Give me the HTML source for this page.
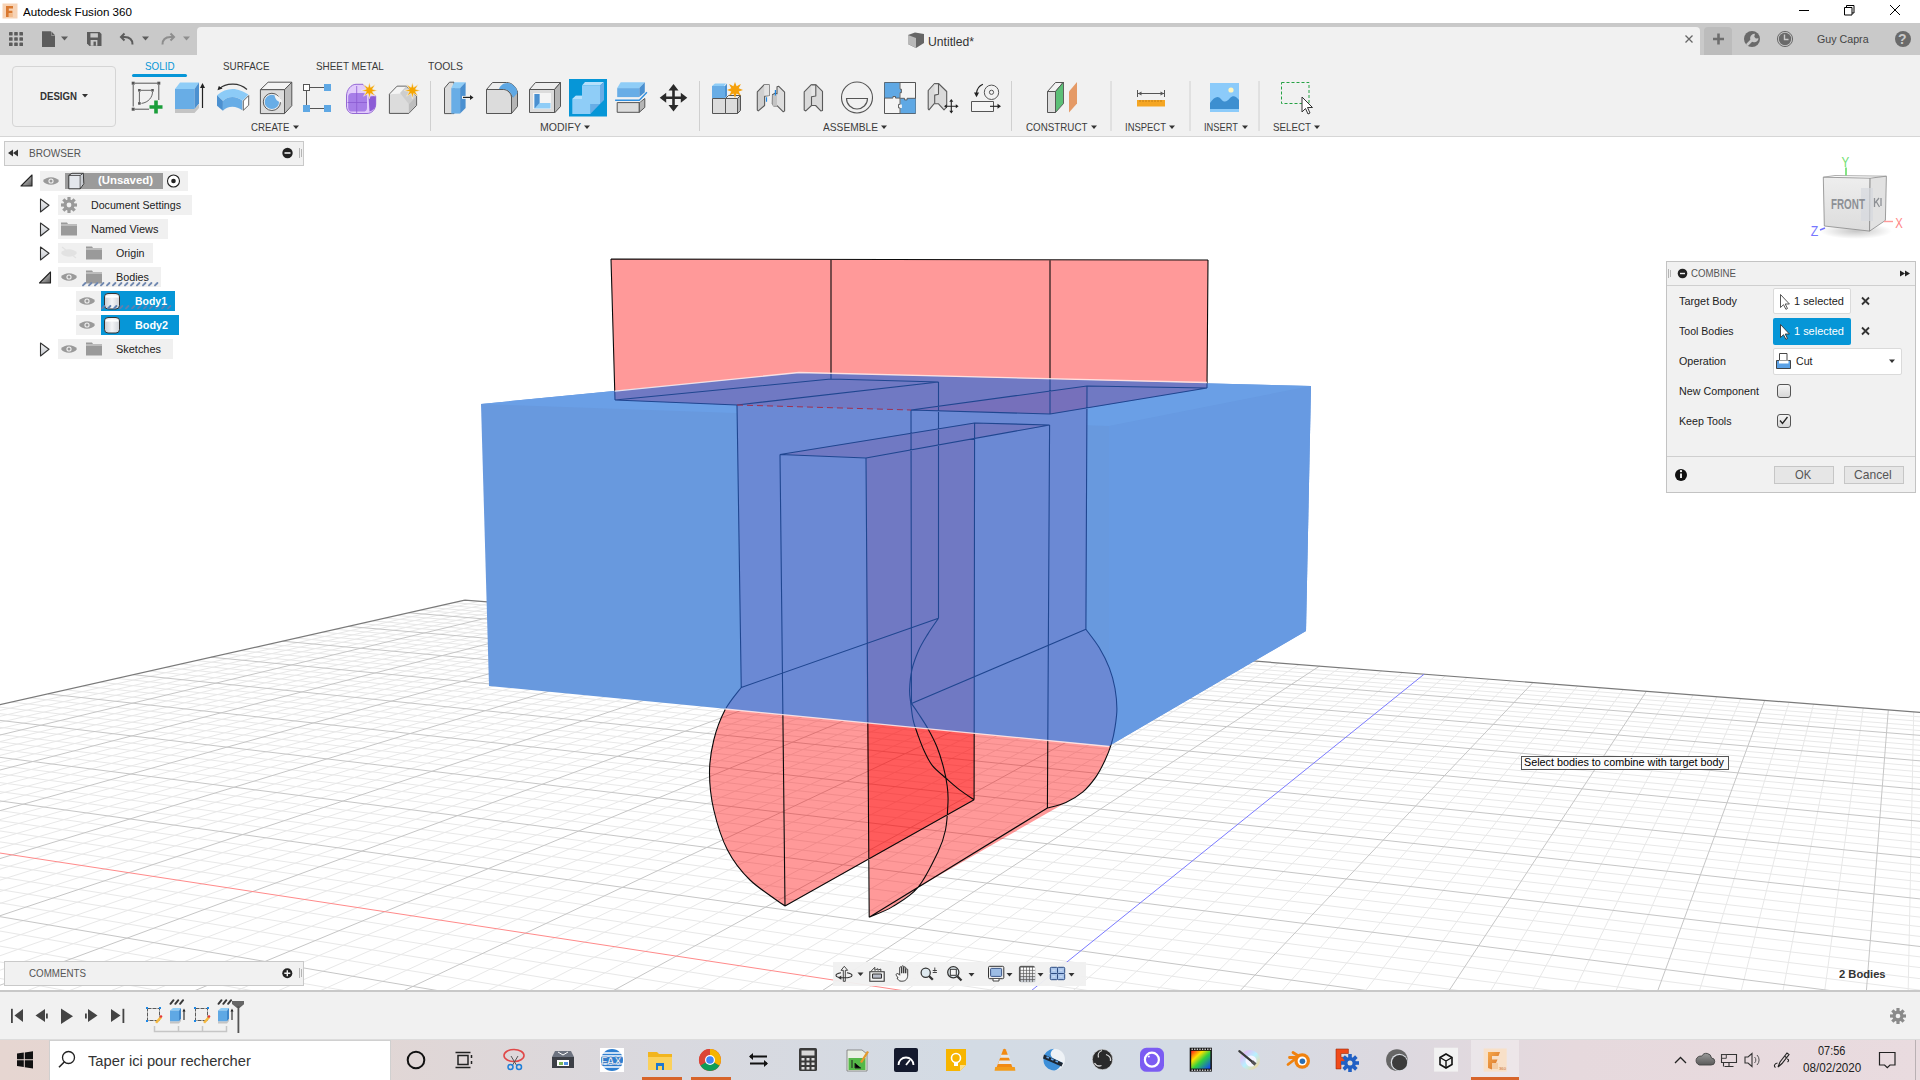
<!DOCTYPE html>
<html><head><meta charset="utf-8"><style>
*{margin:0;padding:0;box-sizing:border-box}
html,body{width:1920px;height:1080px;overflow:hidden;background:#fff;font-family:"Liberation Sans",sans-serif;}
.a{position:absolute}
.t{line-height:1;white-space:nowrap}
</style></head><body>
<svg class="a" style="left:0;top:0" width="1920" height="1080" viewBox="0 0 1920 1080">
<g fill="none">
<path d="M2120.4 1555.1L1991.2 717.9M2044.3 1538.6L1965.1 715.9M1970.2 1522.6L1939.3 713.9M1897.9 1507.0L1913.7 711.9M1758.5 1476.9L1863.2 708.0M1691.3 1462.4L1838.2 706.1M1625.8 1448.2L1813.5 704.2M1561.7 1434.4L1789.0 702.3M1438.0 1407.7L1740.7 698.6M1378.3 1394.8L1716.8 696.7M1319.9 1382.2L1693.1 694.9M1262.8 1369.9L1669.7 693.1M1152.3 1346.0L1623.3 689.5M1098.8 1334.4L1600.4 687.8M1046.5 1323.1L1577.7 686.0M995.3 1312.1L1555.2 684.3M895.9 1290.6L1510.8 680.9M847.8 1280.2L1488.8 679.2M800.6 1270.0L1467.1 677.5M754.4 1260.1L1445.5 675.8M664.6 1240.7L1402.8 672.5M621.1 1231.3L1381.7 670.9M578.3 1222.0L1360.8 669.3M536.4 1213.0L1340.1 667.7M454.9 1195.4L1299.1 664.5M415.3 1186.8L1278.9 663.0M376.4 1178.4L1258.8 661.4M338.2 1170.2L1238.8 659.9M263.8 1154.1L1199.4 656.9M227.6 1146.3L1180.0 655.4M192.1 1138.6L1160.6 653.9M157.1 1131.1L1141.5 652.4M89.1 1116.4L1103.6 649.5M55.9 1109.2L1084.8 648.0M23.2 1102.1L1066.2 646.6M-8.8 1095.2L1047.8 645.2M-71.4 1081.7L1011.3 642.3M-102.0 1075.1L993.2 641.0M-132.0 1068.6L975.3 639.6M-161.6 1062.2L957.5 638.2M-219.3 1049.8L922.4 635.5M-247.5 1043.7L905.0 634.2M-275.3 1037.7L887.7 632.8M-302.6 1031.8L870.6 631.5M-356.0 1020.2L836.6 628.9M-382.1 1014.6L819.9 627.6M-407.8 1009.0L803.2 626.3M-433.2 1003.6L786.7 625.0M-482.8 992.9L754.0 622.5M-507.0 987.6L737.8 621.3M-530.9 982.5L721.7 620.0M-554.5 977.4L705.8 618.8M-600.6 967.4L674.2 616.4M-623.2 962.5L658.5 615.2M-645.4 957.7L643.0 614.0M-667.4 953.0L627.6 612.8M-710.4 943.7L597.1 610.4M-731.5 939.1L582.0 609.2M-752.3 934.6L567.0 608.1M-772.8 930.2L552.1 606.9M-813.1 921.5L522.6 604.7M-832.8 917.3L508.0 603.5M-852.2 913.1L493.5 602.4M-871.5 908.9L479.1 601.3M2190.6 1534.9L-850.8 895.9M2183.2 1500.0L-812.2 887.2M2176.2 1466.9L-774.7 878.8M2169.5 1435.6L-738.2 870.6M2157.2 1377.7L-668.1 854.8M2151.5 1350.8L-634.4 847.3M2146.1 1325.2L-601.6 839.9M2140.9 1300.8L-569.6 832.7M2131.2 1255.2L-508.0 818.9M2126.7 1233.9L-478.3 812.2M2122.3 1213.5L-449.4 805.7M2118.2 1194.0L-421.1 799.3M2110.4 1157.2L-366.6 787.1M2106.7 1139.9L-340.2 781.1M2103.2 1123.3L-314.5 775.4M2099.8 1107.3L-289.3 769.7M2093.3 1077.0L-240.7 758.8M2090.3 1062.6L-217.1 753.5M2087.4 1048.8L-194.1 748.3M2084.5 1035.5L-171.6 743.2M2079.1 1010.1L-127.9 733.4M2076.6 998.0L-106.8 728.7M2074.1 986.3L-86.0 724.0M2071.7 975.0L-65.7 719.5M2067.1 953.5L-26.3 710.6M2064.9 943.2L-7.2 706.3M2062.8 933.2L11.6 702.1M2060.7 923.5L29.9 697.9M2056.8 904.9L65.7 689.9M2054.9 896.0L83.0 686.0M2053.1 887.4L100.1 682.2M2051.3 879.0L116.8 678.4M2047.8 862.8L149.4 671.1M2046.2 855.1L165.2 667.5M2044.6 847.5L180.8 664.0M2043.0 840.2L196.1 660.6M2040.0 826.0L225.9 653.9M2038.6 819.2L240.4 650.7M2037.2 812.5L254.6 647.4M2035.8 806.0L268.7 644.3M2033.1 793.5L296.0 638.1M2031.8 787.5L309.4 635.1M2030.6 781.5L322.5 632.2M2029.4 775.8L335.4 629.3M2027.0 764.6L360.6 623.6M2025.8 759.2L372.9 620.9M2024.7 753.9L385.0 618.1M2023.6 748.8L397.0 615.5M2021.5 738.7L420.3 610.2M2020.5 733.9L431.7 607.7M2019.4 729.1L442.9 605.1M2018.5 724.5L453.9 602.7" stroke="#e8e8e8" stroke-width="1"/>
<path d="M2198.5 1571.9L2017.5 719.9M1827.3 1491.8L1888.3 710.0M1499.2 1420.9L1764.7 700.4M1207.0 1357.8L1646.4 691.3M945.1 1301.2L1532.9 682.6M495.3 1204.1L1319.5 666.1M300.7 1162.1L1219.1 658.4M122.8 1123.6L1122.4 650.9M-40.4 1088.4L1029.4 643.7M-190.7 1055.9L939.9 636.8M-329.5 1026.0L853.5 630.2M-458.2 998.2L770.3 623.8M-577.7 972.3L689.9 617.6M-689.1 948.3L612.3 611.6M-793.1 925.8L537.3 605.8M2198.5 1571.9L-890.4 904.8M2163.2 1405.9L-702.7 862.6M2135.9 1277.5L-538.4 825.7M2096.5 1091.8L-264.7 764.2M2081.8 1022.6L-149.5 738.3M2069.4 964.1L-45.8 715.0M2058.7 914.1L48.0 693.9M2049.5 870.8L133.3 674.7M2041.5 833.0L211.1 657.2M2034.4 799.7L282.5 641.2M2028.2 770.1L348.1 626.4M2022.5 743.7L408.7 612.8" stroke="#c6c6c6" stroke-width="1"/>
<path d="M-890.4 904.8L464.8 600.2M2017.5 719.9L464.8 600.2" stroke="#7a7a7a" stroke-width="1.2"/>
<path d="M2114.2 1175.2L-393.5 793.1" stroke="#ff8a8a" stroke-width="1"/>
<path d="M709.1 1250.3L1424.1 674.2" stroke="#7a7aff" stroke-width="1"/>
</g>
<defs><clipPath id="bsil"><path d="M481 404L799 373L1311 386L1306 631L1109 746L489 686Z"/></clipPath><clipPath id="obsil"><path clip-rule="evenodd" d="M0 0H1920V1080H0ZM481 404L799 373L1311 386L1306 631L1109 746L489 686Z"/></clipPath></defs>
<path d="M611 259L1208 260L1207 388L1050 414L615 400Z" fill="rgba(255,0,0,0.4)"/>
<path d="M741.2 687.5C738.5 691.2 729.6 701.2 725.0 710.0C720.4 718.8 716.3 729.6 713.8 740.0C711.2 750.4 709.5 760.8 709.5 772.5C709.5 784.2 710.8 797.1 713.8 810.0C716.8 822.9 721.5 838.3 727.5 850.0C733.5 861.7 740.4 870.7 750.0 880.0C759.6 889.3 779.2 901.7 785.0 906.0L869.2 858.9L869.2 917.2L869.2 917.2C873.1 915.4 884.5 911.6 892.6 906.6C900.7 901.6 913.8 890.6 918.0 887.4L1065.9 802.4L1065.9 802.4C1068.7 800.7 1077.6 796.4 1082.6 792.2C1087.5 788.0 1091.9 782.6 1095.6 777.4C1099.3 772.1 1102.2 766.2 1104.8 760.7C1107.4 755.2 1109.6 749.7 1111.3 744.1C1113.0 738.5 1114.1 733.3 1115.0 727.4C1115.9 721.5 1116.9 715.4 1116.9 708.9C1116.9 702.4 1116.2 695.3 1115.0 688.5C1113.8 681.7 1112.0 674.9 1109.4 668.1C1106.8 661.3 1103.2 654.3 1099.3 647.8C1095.4 641.3 1088.1 632.4 1085.9 629.3L741.25 687.5Z" fill="rgba(255,0,0,0.4)"/>
<path d="M866.5 700L974.6 700L974.1 799.8L869.2 858.9Z" fill="rgba(255,0,0,0.4)"/>
<path d="M481 404L799 373L1311 386L1306 631L1109 746L489 686Z" fill="#6899de"/>
<path d="M1109 426L1311 386L1306 631L1109 746Z" fill="#679ae2"/>
<path d="M481 404L799 373L1311 386L1109 426Z" fill="#6a9fe6"/>
<g clip-path="url(#bsil)">
<path d="M614.7 391.7L799 373L1207 383L1207 388L1087.5 407.9L1085.9 629.3C1088.1 632.4 1095.4 641.3 1099.3 647.8C1103.2 654.3 1106.8 661.3 1109.4 668.1C1112.0 674.9 1113.8 681.7 1115.0 688.5C1116.2 695.3 1116.9 702.4 1116.9 708.9C1116.9 715.4 1115.9 721.5 1115.0 727.4C1114.1 733.3 1113.0 738.5 1111.3 744.1C1109.6 749.7 1105.9 757.9 1104.8 760.7L725 709.5L725.0 710.0C727.7 706.2 738.5 691.2 741.2 687.5L737 405L615 400Z" fill="#6b89d4"/>
<path d="M614.7 391.7L799 373L1207 383L1207 388L1050 414L911 410L737 405L615 400Z" fill="#7079c3"/>
<path d="M779.5 454.4L974.3 422.7L1049.5 425.3L974.3 438.6L974.6 760L866.5 760L866.3 457.5Z" fill="#7079c3"/>
<path d="M911 410L1087 386L1087.5 407.9L1050 414Z" fill="#7670bb"/>
</g>
<path d="M611 259L1208 260M611 259L615 400M1208 260L1207 388M831 259L831 379M1050 260L1050 414M615 400L737 405M615 400L831 379L938.5 382M737 405L938.5 382M911 410L1087 386L1207 388M911 410L1050 414L1207 388M938.5 382L938.5 618.3M911 410L911.5 703.5M1087 386L1085.9 629.3M737 405L741.25 687.5M780 454.5L974.6 423L1049.6 425M780 454.5L866 458L1049.6 425M780 454.5L785 906M866 458L869.2 917.2M974.6 423L974.1 799.8M1049.6 425L1047.4 808M741.25 687.5L938.5 618.3M911.5 703.5L1085.9 629.3M785 906L974.1 799.8M869.2 917.2L1047.4 808M741.2 687.5C738.5 691.2 729.6 701.2 725.0 710.0C720.4 718.8 716.3 729.6 713.8 740.0C711.2 750.4 709.5 760.8 709.5 772.5C709.5 784.2 710.8 797.1 713.8 810.0C716.8 822.9 721.5 838.3 727.5 850.0C733.5 861.7 740.4 870.7 750.0 880.0C759.6 889.3 779.2 901.7 785.0 906.0M938.5 618.3C936.7 620.9 931.1 628.7 927.8 634.1C924.5 639.5 921.1 644.8 918.5 650.7C915.9 656.6 913.5 662.8 912.0 669.3C910.5 675.8 909.8 684.0 909.6 689.6C909.4 695.2 910.1 697.7 910.7 702.6C911.3 707.5 911.9 714.0 913.0 719.3C914.1 724.5 915.8 728.9 917.6 734.1C919.5 739.3 921.6 745.5 924.1 750.7C926.6 756.0 928.7 761.0 932.4 765.6C936.1 770.2 941.8 774.5 946.3 778.5C950.8 782.5 954.7 786.1 959.3 789.6C963.9 793.1 971.6 798.1 974.1 799.8M911.5 703.5C912.7 705.2 915.8 709.5 918.5 713.7C921.2 717.9 924.7 723.0 927.8 728.5C930.9 734.0 934.4 740.5 937.0 747.0C939.6 753.5 941.8 760.9 943.5 767.4C945.2 773.9 946.5 780.2 947.2 786.0C948.0 791.8 948.3 794.9 948.0 802.2C947.7 809.5 947.2 821.7 945.5 830.0C943.8 838.3 942.6 842.4 938.0 852.0C933.4 861.6 925.6 878.3 918.0 887.4C910.4 896.5 900.7 901.6 892.6 906.6C884.5 911.6 873.1 915.4 869.2 917.2M1085.9 629.3C1088.1 632.4 1095.4 641.3 1099.3 647.8C1103.2 654.3 1106.8 661.3 1109.4 668.1C1112.0 674.9 1113.8 681.7 1115.0 688.5C1116.2 695.3 1116.9 702.4 1116.9 708.9C1116.9 715.4 1115.9 721.5 1115.0 727.4C1114.1 733.3 1113.0 738.5 1111.3 744.1C1109.6 749.7 1107.4 755.2 1104.8 760.7C1102.2 766.2 1099.3 772.1 1095.6 777.4C1091.9 782.6 1087.5 788.0 1082.6 792.2C1077.6 796.4 1071.8 799.8 1065.9 802.4C1060.0 805.0 1050.5 807.1 1047.4 808.0" fill="none" stroke="#0a0a0a" stroke-width="1.1" clip-path="url(#obsil)"/>
<path d="M611 259L1208 260M611 259L615 400M1208 260L1207 388M831 259L831 379M1050 260L1050 414M615 400L737 405M615 400L831 379L938.5 382M737 405L938.5 382M911 410L1087 386L1207 388M911 410L1050 414L1207 388M938.5 382L938.5 618.3M911 410L911.5 703.5M1087 386L1085.9 629.3M737 405L741.25 687.5M780 454.5L974.6 423L1049.6 425M780 454.5L866 458L1049.6 425M780 454.5L785 906M866 458L869.2 917.2M974.6 423L974.1 799.8M1049.6 425L1047.4 808M741.25 687.5L938.5 618.3M911.5 703.5L1085.9 629.3M785 906L974.1 799.8M869.2 917.2L1047.4 808M741.2 687.5C738.5 691.2 729.6 701.2 725.0 710.0C720.4 718.8 716.3 729.6 713.8 740.0C711.2 750.4 709.5 760.8 709.5 772.5C709.5 784.2 710.8 797.1 713.8 810.0C716.8 822.9 721.5 838.3 727.5 850.0C733.5 861.7 740.4 870.7 750.0 880.0C759.6 889.3 779.2 901.7 785.0 906.0M938.5 618.3C936.7 620.9 931.1 628.7 927.8 634.1C924.5 639.5 921.1 644.8 918.5 650.7C915.9 656.6 913.5 662.8 912.0 669.3C910.5 675.8 909.8 684.0 909.6 689.6C909.4 695.2 910.1 697.7 910.7 702.6C911.3 707.5 911.9 714.0 913.0 719.3C914.1 724.5 915.8 728.9 917.6 734.1C919.5 739.3 921.6 745.5 924.1 750.7C926.6 756.0 928.7 761.0 932.4 765.6C936.1 770.2 941.8 774.5 946.3 778.5C950.8 782.5 954.7 786.1 959.3 789.6C963.9 793.1 971.6 798.1 974.1 799.8M911.5 703.5C912.7 705.2 915.8 709.5 918.5 713.7C921.2 717.9 924.7 723.0 927.8 728.5C930.9 734.0 934.4 740.5 937.0 747.0C939.6 753.5 941.8 760.9 943.5 767.4C945.2 773.9 946.5 780.2 947.2 786.0C948.0 791.8 948.3 794.9 948.0 802.2C947.7 809.5 947.2 821.7 945.5 830.0C943.8 838.3 942.6 842.4 938.0 852.0C933.4 861.6 925.6 878.3 918.0 887.4C910.4 896.5 900.7 901.6 892.6 906.6C884.5 911.6 873.1 915.4 869.2 917.2M1085.9 629.3C1088.1 632.4 1095.4 641.3 1099.3 647.8C1103.2 654.3 1106.8 661.3 1109.4 668.1C1112.0 674.9 1113.8 681.7 1115.0 688.5C1116.2 695.3 1116.9 702.4 1116.9 708.9C1116.9 715.4 1115.9 721.5 1115.0 727.4C1114.1 733.3 1113.0 738.5 1111.3 744.1C1109.6 749.7 1107.4 755.2 1104.8 760.7C1102.2 766.2 1099.3 772.1 1095.6 777.4C1091.9 782.6 1087.5 788.0 1082.6 792.2C1077.6 796.4 1071.8 799.8 1065.9 802.4C1060.0 805.0 1050.5 807.1 1047.4 808.0" fill="none" stroke="#1f4690" stroke-width="1.1" clip-path="url(#bsil)"/>
<path d="M737 405L911 410" fill="none" stroke="#a03050" stroke-width="1" stroke-dasharray="6 4" clip-path="url(#bsil)"/>
<path d="M614.7 391.2L799 372.5L1207 382.5M725 709L1109 746.5" fill="none" stroke="rgba(255,235,235,0.85)" stroke-width="1.3"/>
</svg>
<div class="a" style="left:0px;top:0px;width:1920px;height:23px;background:#fff;"></div>
<svg class="a" style="left:2px;top:3px" width="17" height="17" viewBox="0 0 17 17">
<rect x="0.5" y="0.5" width="15" height="15" fill="#f7d3b5"/><path d="M4 3h7v2.5H6.8v2.2h3.6v2.4H6.8V14H4z" fill="#d9782f"/><path d="M6.8 10.1h4v3.9h-4z" fill="#f3bb8a"/></svg>
<div class="a t" style="left:23px;top:5.93px;font-size:11.66px;color:#000;transform:scaleX(0.9951);transform-origin:0 0;">Autodesk Fusion 360</div>
<svg class="a" style="left:1790px;top:0" width="130" height="23" viewBox="1790 0 130 23">
<path d="M1799 10.5h10" stroke="#000" stroke-width="1"/>
<path d="M1844.5 7.5h7.5v7.5h-7.5z M1846.5 7.5v-2h7.5v7.5h-2" fill="none" stroke="#000" stroke-width="1"/>
<path d="M1890 5l10 10M1900 5l-10 10" stroke="#000" stroke-width="1"/></svg>
<div class="a" style="left:0px;top:23px;width:1920px;height:32px;background:#c9c9c9;"></div>
<div class="a" style="left:197px;top:27px;width:1503px;height:28px;background:#f1f1f1;border-radius:4px 4px 0 0;"></div>
<div class="a" style="left:1704px;top:27px;width:28px;height:28px;background:#bcbcbc;border-radius:4px 4px 0 0;"></div>
<svg class="a" style="left:0;top:23px" width="1920" height="32" viewBox="0 23 1920 32">
<g fill="#5c5c5c">
<rect x="9" y="32" width="3.6" height="3.6" rx="0.6"/><rect x="14.2" y="32" width="3.6" height="3.6" rx="0.6"/><rect x="19.4" y="32" width="3.6" height="3.6" rx="0.6"/>
<rect x="9" y="37.2" width="3.6" height="3.6" rx="0.6"/><rect x="14.2" y="37.2" width="3.6" height="3.6" rx="0.6"/><rect x="19.4" y="37.2" width="3.6" height="3.6" rx="0.6"/>
<rect x="9" y="42.4" width="3.6" height="3.6" rx="0.6"/><rect x="14.2" y="42.4" width="3.6" height="3.6" rx="0.6"/><rect x="19.4" y="42.4" width="3.6" height="3.6" rx="0.6"/>
<path d="M42 31.2h8.6l4.4 4.4v11.3h-13z"/><path d="M51.2 31.2v4.4h3.8z" fill="#c9c9c9"/><path d="M51.5 31.5l3.2 3.4h-3.2z" fill="#5c5c5c"/>
<path d="M61 36.5h7l-3.5 4z"/>
<path d="M87 32h12.5l2 2v12h-12l-2.5-2.5z"/>
<path d="M142 36.5h7l-3.5 4z"/>
</g>
<path d="M90.4 33.3h7.5v4.2h-7.5z M90.6 40.1h6.8v5.7h-6.8z" fill="#c9c9c9"/>
<path d="M93.5 41.6h2.4v4.2h-2.4z" fill="#5c5c5c"/>
<path d="M132.5 44.5c0-5-3-7.5-8-7.5h-3M124.5 33.5l-3.5 3.5 3.5 3.5" fill="none" stroke="#5c5c5c" stroke-width="2"/>
<path d="M162.5 44.5c0-5 3-7.5 8-7.5h3M170.5 33.5l3.5 3.5-3.5 3.5" fill="none" stroke="#8e8e8e" stroke-width="2"/>
<path d="M183 36.5h7l-3.5 4z" fill="#8e8e8e"/>
<!-- doc cube -->
<path d="M908 35l7-2.5 9 1.5v9l-8 5-8-4z" fill="#666"/>
<path d="M908 35l8 3v10l-8-4z" fill="#b8b8b8"/>
<path d="M1685.5 35.5l7 7M1692.5 35.5l-7 7" stroke="#666" stroke-width="1.3"/>
<path d="M1718.5 33.5v11M1713 39h11" stroke="#6e6e6e" stroke-width="2.6"/>
<circle cx="1752" cy="39" r="8" fill="#6a6a6a"/>
<path d="M1747.5 44.5l5-5" stroke="#c9c9c9" stroke-width="2.6" stroke-linecap="round"/><path d="M1755.5 34a4.2 4.2 0 1 0 3 4.2l-2.6 0.3-1.6-1.8 0.6-2.6z" fill="#c9c9c9"/>
<circle cx="1785" cy="39" r="7.6" fill="none" stroke="#6a6a6a" stroke-width="1"/>
<circle cx="1785" cy="39" r="6.2" fill="#6a6a6a"/>
<path d="M1784.5 34.5v5h4" stroke="#c9c9c9" stroke-width="1.4" fill="none"/>
<circle cx="1903" cy="39" r="8" fill="#6a6a6a"/>
</g></svg>
<div class="a t" style="left:928px;top:35.55px;font-size:12.35px;color:#333;transform:scaleX(0.9858);transform-origin:0 0;">Untitled*</div>
<div class="a t" style="left:1817px;top:35.18px;font-size:10.43px;color:#444;transform:scaleX(1.0237);transform-origin:0 0;">Guy Capra</div>
<div class="a t" style="left:1898px;top:31.5px;font-size:14px;font-weight:bold;color:#c9c9c9">?</div>
<div class="a" style="left:0px;top:55px;width:1920px;height:81px;background:#f1f1f1;"></div>
<div class="a" style="left:0px;top:136px;width:1920px;height:1px;background:#d6d6d6;"></div>
<div class="a" style="left:12px;top:65.5px;width:104px;height:61px;border:1px solid #d5d5d5;border-radius:4px;"></div>
<div class="a t" style="left:39.5px;top:90.71px;font-size:10.97px;color:#333;font-weight:bold;transform:scaleX(0.8794);transform-origin:0 0;">DESIGN</div>
<div class="a t" style="left:144.5px;top:60.71px;font-size:10.97px;color:#0696d7;transform:scaleX(0.8958);transform-origin:0 0;">SOLID</div>
<div class="a" style="left:132px;top:73.5px;width:55px;height:3px;background:#0696d7;border-radius:1.5px;"></div>
<div class="a t" style="left:223px;top:61.21px;font-size:10.97px;color:#3a3a3a;transform:scaleX(0.8971);transform-origin:0 0;">SURFACE</div>
<div class="a t" style="left:316px;top:61.21px;font-size:10.97px;color:#3a3a3a;transform:scaleX(0.9008);transform-origin:0 0;">SHEET METAL</div>
<div class="a t" style="left:428px;top:61.21px;font-size:10.97px;color:#3a3a3a;transform:scaleX(0.9460);transform-origin:0 0;">TOOLS</div>
<div class="a t" style="left:251px;top:122.36px;font-size:11.39px;color:#3c3c3c;transform:scaleX(0.8492);transform-origin:0 0;">CREATE</div>
<div class="a t" style="left:540px;top:122.36px;font-size:11.39px;color:#3c3c3c;transform:scaleX(0.9261);transform-origin:0 0;">MODIFY</div>
<div class="a t" style="left:823px;top:122.36px;font-size:11.39px;color:#3c3c3c;transform:scaleX(0.8960);transform-origin:0 0;">ASSEMBLE</div>
<div class="a t" style="left:1026px;top:122.36px;font-size:11.39px;color:#3c3c3c;transform:scaleX(0.8605);transform-origin:0 0;">CONSTRUCT</div>
<div class="a t" style="left:1125px;top:122.36px;font-size:11.39px;color:#3c3c3c;transform:scaleX(0.8309);transform-origin:0 0;">INSPECT</div>
<div class="a t" style="left:1204px;top:122.36px;font-size:11.39px;color:#3c3c3c;transform:scaleX(0.8184);transform-origin:0 0;">INSERT</div>
<div class="a t" style="left:1273px;top:122.36px;font-size:11.39px;color:#3c3c3c;transform:scaleX(0.8580);transform-origin:0 0;">SELECT</div>
<svg class="a" style="left:0;top:55px" width="1920" height="82" viewBox="0 55 1920 82"><path d="M82 94h6l-3 3.5z" fill="#333"/><path d="M293 125.5h6l-3 3.5z" fill="#333"/><path d="M584 125.5h6l-3 3.5z" fill="#333"/><path d="M881 125.5h6l-3 3.5z" fill="#333"/><path d="M1091 125.5h6l-3 3.5z" fill="#333"/><path d="M1169 125.5h6l-3 3.5z" fill="#333"/><path d="M1242 125.5h6l-3 3.5z" fill="#333"/><path d="M1314 125.5h6l-3 3.5z" fill="#333"/><path d="M430.5 81v50" stroke="#d0d0d0" stroke-width="1"/><path d="M699.5 81v50" stroke="#d0d0d0" stroke-width="1"/><path d="M1011.5 81v50" stroke="#d0d0d0" stroke-width="1"/><path d="M1111 81v50" stroke="#d0d0d0" stroke-width="1"/><path d="M1190 81v50" stroke="#d0d0d0" stroke-width="1"/><path d="M1259 81v50" stroke="#d0d0d0" stroke-width="1"/><g>
<path d="M135 83.2h22.5M133.2 85v21.5M135 109.2h14M158.8 85v15" fill="none" stroke="#555" stroke-width="1"/>
<rect x="131.7" y="81.7" width="3" height="3" fill="#555"/><rect x="157.3" y="81.7" width="3" height="3" fill="#555"/><rect x="131.7" y="107.7" width="3" height="3" fill="#555"/>
<rect x="138.1" y="89" width="2.6" height="2.6" fill="#555"/><rect x="151.2" y="89" width="2.6" height="2.6" fill="#555"/><rect x="138.1" y="102.1" width="2.6" height="2.6" fill="#555"/>
<path d="M139.4 92v10M141 90.3h10M152.5 92c0 5-4 10.5-11 11.4" fill="none" stroke="#555" stroke-width="0.9"/>
<path d="M156 100.5v13M149.5 107h13" stroke="#1a9e3a" stroke-width="3.6"/></g><g><path d="M175 109h19.5l4.5-5v4l-4.5 5H175z" fill="#c4c4c4"/>
<path d="M175 89h19.5v20H175z" fill="#68ade6"/><path d="M175 89l5-6.5h19l-4.5 6.5z" fill="#8fcdf7"/><path d="M194.5 89l4.5-6.5v21l-4.5 5.5z" fill="#4b90d0"/>
<path d="M202.5 108V85" stroke="#222" stroke-width="1.2"/><path d="M200 88l2.5-5 2.5 5z" fill="#222"/></g><path d="M247 89.5C242 85 236.5 84 232.5 84.1C227 84.2 222 86.2 219.5 88.8" fill="none" stroke="#333" stroke-width="1.1"/><path d="M217.5 90.3L218.8 86l3.8 2.6z" fill="#222"/>
<path d="M217 95.3C222 91 227 89 232.5 89C238 89 244 91.5 248.4 94.6L242.8 100.5C239 98.5 236 97 232.5 97C228.5 97 225.5 98.5 222.9 101Z" fill="#8ccbf7"/>
<path d="M222.9 101C225.5 98.5 228.5 97 232.5 97C236 97 239 98.5 242.3 100.5V110.3C239 108 236 106.8 232.5 106.8C228.5 106.8 225.5 108.3 222.9 110.8Z" fill="#68ade6"/>
<path d="M217 95.3L222.9 101V110.8L217 105.7Z" fill="#4b90d0"/>
<path d="M243.3 101L248.7 95.6V105.2L243.3 110.3Z" fill="#fff" stroke="#555" stroke-width="0.9"/>
<g stroke="#555" stroke-width="1"><path d="M260.4 89.7L268.1 82.2H291.8L284.5 89.7Z" fill="#f4f4f4"/><path d="M284.5 89.7L291.8 82.2V105.7L284.5 113.6Z" fill="#bdbdbd"/><path d="M260.4 89.7H284.5V113.6H260.4Z" fill="#dcdcdc"/>
<circle cx="271.9" cy="101.9" r="8.6" fill="#f2f2f2"/></g><circle cx="271.9" cy="101.9" r="7.2" fill="#68ade6"/><path d="M274.5 94.9C275 99 277.5 102 282 102.6A8 8 0 0 0 274.5 94.9Z" fill="#f2f2f2"/><g><rect x="303.5" y="84.5" width="6" height="6" fill="#fff" stroke="#555"/><rect x="324" y="84" width="7" height="7" fill="#5fa8e4"/><rect x="303" y="105" width="7" height="7" fill="#5fa8e4"/><rect x="324" y="105" width="7" height="7" fill="#5fa8e4"/>
<path d="M310 87.5h14M306.5 91v14M310 108.5h14" stroke="#555" stroke-width="1"/></g><path d="M346.5 96C346.5 90 351 84.3 356 84.3H363L368 90L375.7 96V104C375.7 109 372 113.5 367 113.5H353C349 113.5 346.5 110 346.5 106Z" fill="#e2ccfb" stroke="#8a5ad0" stroke-width="0.9"/>
<path d="M348.2 96.5C348.2 94 350 93 352 93H363C365.5 93 367 94.5 367 97V108C367 110.5 365.5 111.6 363 111.6H352C350 111.6 348.2 110.5 348.2 108Z" fill="#a77ee8"/>
<path d="M368.5 96.5L375.7 96V105C375.5 108 372 111 369.5 111.5Z" fill="#8c5cd6"/>
<path d="M347.5 102.5H367M356.7 86V113" stroke="#8a5ad0" stroke-width="0.8"/>
<path d="M369.40 82.20L370.66 87.35L375.20 84.60L372.45 89.14L377.60 90.40L372.45 91.66L375.20 96.20L370.66 93.45L369.40 98.60L368.14 93.45L363.60 96.20L366.35 91.66L361.20 90.40L366.35 89.14L363.60 84.60L368.14 87.35Z" fill="#f5a500" stroke="#f1f1f1" stroke-width="0.6"/>
<path d="M389.4 94.2L397.1 86.2H406.4L416.6 96.2V105.4L408.8 113.4H389.4Z" fill="#dcdcdc" stroke="#555" stroke-width="1"/>
<path d="M389.9 94.2L397.3 86.7H406.3L402 93.5Z" fill="#f4f4f4"/><path d="M408.8 104.1L416.1 96.5V105.2L408.8 112.9Z" fill="#bdbdbd"/><path d="M400 93L406 86.5L416 96.2L408.8 104Z" fill="#cdcdcd"/>
<path d="M412.40 82.20L413.66 87.35L418.20 84.60L415.45 89.14L420.60 90.40L415.45 91.66L418.20 96.20L413.66 93.45L412.40 98.60L411.14 93.45L406.60 96.20L409.35 91.66L404.20 90.40L409.35 89.14L406.60 84.60L411.14 87.35Z" fill="#f5a500" stroke="#f1f1f1" stroke-width="0.6"/><g><path d="M444.5 88.1l5-5.9h4.5v31.4h-9.5z" fill="#dcdcdc" stroke="#555" stroke-width="1"/>
<path d="M451.3 88.1l3-5.9h11.3l-5.5 5.9z" fill="#8fcdf7"/><path d="M451.3 88.1h8.8v25.5h-8.8z" fill="#68ade6"/><path d="M460.1 88.1l5.5-5.9v25.9l-5.5 5.5z" fill="#4b90d0"/>
<path d="M462 97.4h9" stroke="#f1f1f1" stroke-width="3"/><path d="M463 97.4h8" stroke="#222" stroke-width="1.2"/><path d="M470 94.9l3.5 2.5-3.5 2.5z" fill="#222"/></g><g><path d="M486.5 89.5l6-7h14c6 0 11 6 11 11l-6 6v-3c0-4-4-7-8-7z" fill="#eee" stroke="#555" stroke-width="1"/>
<path d="M486.5 89.5h17c4 0 8 4 8 8v16h-25z" fill="#dcdcdc" stroke="#555" stroke-width="1"/><path d="M511.5 97l6-5.5v15l-6 7z" fill="#b5b5b5" stroke="#555" stroke-width="1"/>
<path d="M499 89c1-3 4-6 8-6 6 0 10 5 10.5 10l-4.5 5c-1-5-5-9-10-9z" fill="#5fa8e4"/></g><g stroke="#555" stroke-width="1"><path d="M529.5 89.5l6-7h25l-6 7z" fill="#eee"/><path d="M554.5 89.5l6-7v24l-6 6.5z" fill="#b5b5b5"/><path d="M529.5 89.5h25v23h-25z" fill="#dcdcdc"/></g>
<rect x="533" y="93" width="18" height="16" fill="#f4f4f4"/><path d="M534.5 94h5v9h11v5.5h-16z" fill="#8fcdf7"/><path d="M534.5 94h5v9l-5 5.5z" fill="#4b90d0"/><rect x="569" y="79" width="38" height="37.5" fill="#0696d7"/>
<path d="M572.3 99l3.5-3.3h14.5v18.2h-18z" fill="#8fcdf7"/><path d="M572.3 99l3.5-3.3h10l-3.5 3.3z" fill="#b6e0fb"/>
<path d="M582 85.4l3-3.5h19l-4 3.5z" fill="#b6e0fb"/><path d="M582 85.4h18v18.6h-18z" fill="#8fcdf7"/><path d="M600 85.4l4-3.5v18l-4 4.1z" fill="#68ade6"/>
<path d="M590.3 104h9.7l-9.7 9.9z" fill="#68ade6"/><path d="M582 99h8.3v15h-8.3z" fill="#8fcdf7"/><g><path d="M617.2 102.6h22.1v9.7h-22.1z" fill="#dcdcdc" stroke="#555" stroke-width="1"/><path d="M639.3 102.6l5.5-4.1v8.9l-5.5 4.9z" fill="#b5b5b5" stroke="#555" stroke-width="1"/>
<path d="M615.1 100.3h24.2l7.6-8" stroke="#f1f1f1" stroke-width="3.2" fill="none"/><path d="M615.1 100.3h24.2l7.6-8" stroke="#2f8fe0" stroke-width="1.4" fill="none"/>
<path d="M617.2 88.1l3.5-5.9h24.1l-5.5 5.9z" fill="#8fcdf7"/><path d="M617.2 88.1h22.1v9h-22.1z" fill="#68ade6"/><path d="M639.3 88.1l5.5-5.9v10.1l-5.5 4.8z" fill="#4b90d0"/></g><g fill="#2a2a2a"><path d="M673.5 84l-5 6.5h3.7v6h-6v-3.7l-6.5 5 6.5 5v-3.7h6v6h-3.7l5 6.5 5-6.5h-3.7v-6h6v3.7l6.5-5-6.5-5v3.7h-6v-6h3.7z"/></g><g stroke="#555" stroke-width="1"><path d="M712.5 98.5h13v15h-13z" fill="#dcdcdc"/><path d="M725.5 98.5l3-3h12l-3 3z" fill="#eee"/><path d="M725.5 98.5h12v15h-12z" fill="#dcdcdc"/><path d="M737.5 98.5l3-3v15l-3 3z" fill="#b5b5b5"/></g>
<path d="M712 86l3-2.5h11l-2 2.5z" fill="#8fcdf7"/><path d="M712 86h13v12h-13z" fill="#68ade6"/><path d="M725 86l2-2.5v12.5l-2 2z" fill="#4b90d0"/>
<path d="M735 82l1.6 4.2 4.3-2.2-2.2 4.3 4.3 1.6-4.3 1.6 2.2 4.3-4.3-2.2-1.6 4.3-1.6-4.3-4.3 2.2 2.2-4.3-4.3-1.6 4.3-1.6-2.2-4.3 4.3 2.2z" fill="#f5a00a"/><g stroke="#5a5a5a" stroke-width="1.1" stroke-linejoin="round">
<path d="M757.3 91.8L764.2 84.7H769.2V95.5L764.6 96.3V105.5L758.3 110.9L757.3 110.1Z" fill="#cfcfcf"/>
<path d="M764.2 84.9h5v10.6h-5z" fill="#e2e2e2" stroke="none"/>
<path d="M772.5 94.7L774.6 93.4L777 93.8V86.8L778.8 86.3L784.6 92.2V110.9L783.3 111.8L777.3 105.9H773.8L772.3 103.8Z" fill="#dedede"/>
<path d="M772.5 95h4.5v10.9h-4.5z" fill="#c4c4c4" stroke="none"/>
<path d="M804.2 91.8L811.3 84.7H815.8L822.5 91.3V110.5L820.8 110.9L815.6 105.5H811.5L805.8 110.9L804.2 110.1Z" fill="#dadada"/>
<path d="M811.3 85h4.5v11l-4.3 0.8v8.7" fill="#e6e6e6"/>
<path d="M928.2 90.5L934.5 83.5H938.5L946.7 91.5V107L944 109.9L938.5 103.8H934L929 109.9L928.2 109Z" fill="#dadada"/>
<path d="M934.5 83.8h4v10.5l-3.8 0.8v8.7" fill="#e6e6e6"/>
</g>
<path d="M766.5 97.2v4.6M775.4 90v5.5" stroke="#1e88e5" stroke-width="1.2"/>
<circle cx="857" cy="97.5" r="15.5" fill="none" stroke="#555" stroke-width="1.1"/><path d="M846.5 98.5h21c0 6-5 10.5-10.5 10.5s-10.5-4.5-10.5-10.5z" fill="none" stroke="#555" stroke-width="1.1"/>
<path d="M884.5 82.5h31v31h-31z" fill="#f4f4f4" stroke="#555" stroke-width="1"/>
<path d="M884.7 82.7h15v6.5h1.7v3.5h-1.7v5.4h-4.5v-1.6h-2.6v1.6h-7.9z" fill="#5fa8e4"/>
<path d="M900.3 98.3h4.2v1.6h2.6v-1.6h8.5v15h-15.3v-5.2h1.6v-3.5h-1.6z" fill="#5fa8e4"/>
<path d="M900 82.7v6.5h1.4v3.5H900v5.4h-4.5v-1.6h-2.6v1.6h-8.2 M900 98v6.4h-1.5v3.5h1.5v5.4 M900.3 98.3h4.2v1.6h2.6v-1.6h8.5" fill="none" stroke="#555" stroke-width="0.9"/>
<g fill="#222"><path d="M951.3 101.3v10M946.3 106.3h10" stroke="#222" stroke-width="1.1"/><path d="M951.3 99l-2 2.8h4z M951.3 113.6l-2-2.8h4z M944 106.3l2.8-2v4z M958.6 106.3l-2.8-2v4z"/></g>
<path d="M971.5 101.5h22v10h-22z" fill="#f4f4f4" stroke="#555" stroke-width="1"/><path d="M990 106.3h8" stroke="#222" stroke-width="1.1"/><path d="M997.5 103.8l3.5 2.5-3.5 2.5z" fill="#222"/>
<circle cx="991.5" cy="92.3" r="7.2" fill="none" stroke="#555" stroke-width="1"/><circle cx="991.5" cy="92.3" r="2.1" fill="none" stroke="#555" stroke-width="1"/>
<path d="M982.9 84.2c-3.5 1.5-6 4.5-6.5 9" fill="none" stroke="#222" stroke-width="1.2"/><path d="M974 92.5l2.5 4.7 2.6-4.7z" fill="#222"/><g stroke="#555" stroke-width="1" stroke-linejoin="round"><path d="M1047.5 91.5l8-9h7.5l-7.5 9z" fill="#f2f2f2"/><path d="M1047.5 91.5h8v21h-8z" fill="#dcdcdc"/></g>
<path d="M1055.5 91.5l8-9.5v21.5l-8 9z" fill="#5bbf76" stroke="#555" stroke-width="0.9" stroke-linejoin="round"/><path d="M1069 91.5l8-9.5v21.5l-8 9z" fill="#e59a66"/><g><path d="M1137 100h28v6.5h-28z" fill="#f5a623"/><path d="M1140 100v2M1143 100v2M1146 100v2M1149 100v2M1152 100v2M1155 100v2M1158 100v2M1161 100v2" stroke="#b8740c" stroke-width="0.8"/>
<path d="M1137.5 90v7M1164.5 90v7M1138 93.5h26" stroke="#555" stroke-width="1"/><path d="M1138 93.5l3.5-2v4z M1164 93.5l-3.5-2v4z" fill="#555"/></g><g><rect x="1210" y="83" width="29" height="29" fill="#8ccbfa"/><path d="M1210 103c4-6 8-8 11-4 3 4 6 3 9-1 3-3 6-2 9 2v9h-29z" fill="#3d8fd0"/><circle cx="1231" cy="90" r="2.6" fill="#fff5c0"/></g><g><path d="M1281.5 82.5h27.5v21h-27.5z" fill="none" stroke="#25a244" stroke-width="1" stroke-dasharray="3 2"/>
<path d="M1302 97v15l3.5-3.5 2.5 5.5 2-1-2.5-5.5h5z" fill="#fff" stroke="#333" stroke-width="1"/></g></svg>
<div class="a" style="left:4px;top:141px;width:300px;height:25px;background:#f1f1f1;border:1px solid #c9c9c9"></div>
<div class="a t" style="left:29px;top:147.86px;font-size:11.39px;color:#555;transform:scaleX(0.8839);transform-origin:0 0;">BROWSER</div>
<div class="a" style="left:40px;top:171px;width:148px;height:20px;background:#f0f0f0;"></div>
<div class="a" style="left:58px;top:195px;width:134px;height:20px;background:#f0f0f0;"></div>
<div class="a" style="left:58px;top:219px;width:110px;height:20px;background:#f0f0f0;"></div>
<div class="a" style="left:58px;top:243px;width:95px;height:20px;background:#f0f0f0;"></div>
<div class="a" style="left:58px;top:267px;width:103px;height:20px;background:#f0f0f0;"></div>
<div class="a" style="left:76px;top:291px;width:99px;height:20px;background:#f0f0f0;"></div>
<div class="a" style="left:76px;top:315px;width:103px;height:20px;background:#f0f0f0;"></div>
<div class="a" style="left:58px;top:339px;width:115px;height:20px;background:#f0f0f0;"></div>
<div class="a" style="left:65px;top:173px;width:98px;height:16px;background:#9b9b9b;"></div>
<div class="a" style="left:101px;top:291px;width:74px;height:20px;background:#0696d7;"></div>
<div class="a" style="left:101px;top:315px;width:78px;height:20px;background:#0696d7;"></div>
<svg class="a" style="left:0;top:140px" width="320" height="225" viewBox="0 140 320 225"><defs><linearGradient id="tg" x1="0" y1="0" x2="1" y2="1"><stop offset="0" stop-color="#f0f0f0"/><stop offset="1" stop-color="#555"/></linearGradient><linearGradient id="tc" x1="0" y1="0" x2="0" y2="1"><stop offset="0" stop-color="#f4f4f4"/><stop offset="1" stop-color="#c4c8cf"/></linearGradient><linearGradient id="bd" x1="0" y1="0" x2="1" y2="0"><stop offset="0" stop-color="#c9ccd2"/><stop offset="0.5" stop-color="#f4f5f7"/><stop offset="1" stop-color="#d0d3d8"/></linearGradient></defs><path d="M8 153l5-3.5v7z M13 153l5-3.5v7z" fill="#333"/><circle cx="287.5" cy="153" r="5.2" fill="#222"/><path d="M284.5 153h6" stroke="#f1f1f1" stroke-width="1.6"/><path d="M299.5 148v10M301.5 149v8" stroke="#9a9a9a" stroke-width="0.7"/><path d="M21 186L32 175v11z" fill="url(#tg)" stroke="#222" stroke-width="1.1" stroke-linejoin="round"/><path d="M43 181c3-5 13-5 16 0c-3 5-13 5-16 0z" fill="#9a9a9a"/><circle cx="51" cy="181" r="2.6" fill="#f0f0f0"/><circle cx="51" cy="181" r="1.5" fill="#9a9a9a"/><path d="M68.8 175.4L71.9 173.3H83.3L83.8 183.7L80.2 188.8H68.8Z" fill="#e4e7ec" stroke="#333" stroke-width="0.95" stroke-linejoin="round"/><path d="M68.8 175.4H80.2L83.3 173.3M80.2 175.4V188.8" fill="none" stroke="#333" stroke-width="0.85"/><path d="M80.7 175.8L83 174.2V183.5L80.7 187z" fill="#c9ccd2"/><circle cx="173.5" cy="181" r="6" fill="#fff" stroke="#222" stroke-width="1.1"/><circle cx="173.5" cy="181" r="2.3" fill="#222"/><path d="M40.5 199l8.5 6.3-8.5 6.7z" fill="url(#tc)" stroke="#333" stroke-width="1.1" stroke-linejoin="round"/><g transform="translate(69 205)"><circle r="5.5" fill="#9a9a9a"/><path d="M-1.6-8h3.2v16h-3.2z" fill="#9a9a9a" transform="rotate(0)"/><path d="M-1.6-8h3.2v16h-3.2z" fill="#9a9a9a" transform="rotate(45)"/><path d="M-1.6-8h3.2v16h-3.2z" fill="#9a9a9a" transform="rotate(90)"/><path d="M-1.6-8h3.2v16h-3.2z" fill="#9a9a9a" transform="rotate(135)"/><circle r="2.4" fill="#f0f0f0"/></g><path d="M40.5 223l8.5 6.3-8.5 6.7z" fill="url(#tc)" stroke="#333" stroke-width="1.1" stroke-linejoin="round"/><path d="M61 222.5h6l1 1.5h9v11.5h-16z" fill="#9a9a9a"/><path d="M61 225.0h16" stroke="#f0f0f0" stroke-width="0.8"/><path d="M40.5 247l8.5 6.3-8.5 6.7z" fill="url(#tc)" stroke="#333" stroke-width="1.1" stroke-linejoin="round"/><path d="M61 253c3-5 13-5 16 0c-3 5-13 5-16 0z" fill="#e2e2e2"/><path d="M62 247l14 11" stroke="#e2e2e2" stroke-width="1.2"/><path d="M86 246.5h6l1 1.5h9v11.5h-16z" fill="#9a9a9a"/><path d="M86 249.0h16" stroke="#f0f0f0" stroke-width="0.8"/><path d="M39.5 283L50.5 272v11z" fill="url(#tg)" stroke="#222" stroke-width="1.1" stroke-linejoin="round"/><path d="M61 277c3-5 13-5 16 0c-3 5-13 5-16 0z" fill="#9a9a9a"/><circle cx="69" cy="277" r="2.6" fill="#f0f0f0"/><circle cx="69" cy="277" r="1.5" fill="#9a9a9a"/><path d="M86 270.5h6l1 1.5h9v11.5h-16z" fill="#9a9a9a"/><path d="M86 273.0h16" stroke="#f0f0f0" stroke-width="0.8"/><path d="M83.0 285.40000000000003l2.4 -2.4M89.0 285.40000000000003l2.4 -2.4M95.0 285.40000000000003l2.4 -2.4M101.0 285.40000000000003l2.4 -2.4M107.0 285.40000000000003l2.4 -2.4M113.0 285.40000000000003l2.4 -2.4M119.0 285.40000000000003l2.4 -2.4M125.0 285.40000000000003l2.4 -2.4M131.0 285.40000000000003l2.4 -2.4M137.0 285.40000000000003l2.4 -2.4M143.0 285.40000000000003l2.4 -2.4M149.0 285.40000000000003l2.4 -2.4M155.0 285.40000000000003l2.4 -2.4" stroke="#7088b0" stroke-width="1.9" stroke-linecap="round"/><path d="M79 301c3-5 13-5 16 0c-3 5-13 5-16 0z" fill="#9a9a9a"/><circle cx="87" cy="301" r="2.6" fill="#f0f0f0"/><circle cx="87" cy="301" r="1.5" fill="#9a9a9a"/><rect x="104.5" y="293.5" width="15" height="15.5" rx="3.5" fill="url(#bd)" stroke="#333" stroke-width="1"/><path d="M105.5 296.5h13" stroke="#fff" stroke-width="2.2"/><path d="M102.0 308.40000000000003l2.4 -2.4M108.0 308.40000000000003l2.4 -2.4M114.0 308.40000000000003l2.4 -2.4M120.0 308.40000000000003l2.4 -2.4M126.0 308.40000000000003l2.4 -2.4M132.0 308.40000000000003l2.4 -2.4M138.0 308.40000000000003l2.4 -2.4M144.0 308.40000000000003l2.4 -2.4M150.0 308.40000000000003l2.4 -2.4M156.0 308.40000000000003l2.4 -2.4M162.0 308.40000000000003l2.4 -2.4M168.0 308.40000000000003l2.4 -2.4" stroke="#5f80b0" stroke-width="1.9" stroke-linecap="round"/><path d="M79 325c3-5 13-5 16 0c-3 5-13 5-16 0z" fill="#9a9a9a"/><circle cx="87" cy="325" r="2.6" fill="#f0f0f0"/><circle cx="87" cy="325" r="1.5" fill="#9a9a9a"/><rect x="104.5" y="317.5" width="15" height="15.5" rx="3.5" fill="url(#bd)" stroke="#333" stroke-width="1"/><path d="M105.5 320.5h13" stroke="#fff" stroke-width="2.2"/><path d="M40.5 343l8.5 6.3-8.5 6.7z" fill="url(#tc)" stroke="#333" stroke-width="1.1" stroke-linejoin="round"/><path d="M61 349c3-5 13-5 16 0c-3 5-13 5-16 0z" fill="#9a9a9a"/><circle cx="69" cy="349" r="2.6" fill="#f0f0f0"/><circle cx="69" cy="349" r="1.5" fill="#9a9a9a"/><path d="M86 342.5h6l1 1.5h9v11.5h-16z" fill="#9a9a9a"/><path d="M86 345.0h16" stroke="#f0f0f0" stroke-width="0.8"/></svg>
<div class="a t" style="left:98px;top:175.28px;font-size:11.25px;color:#fff;font-weight:bold;transform:scaleX(1.0115);transform-origin:0 0;">(Unsaved)</div>
<div class="a t" style="left:91px;top:199.51px;font-size:10.97px;color:#222;transform:scaleX(0.9708);transform-origin:0 0;">Document Settings</div>
<div class="a t" style="left:91px;top:223.51px;font-size:10.97px;color:#222;">Named Views</div>
<div class="a t" style="left:116px;top:247.51px;font-size:10.97px;color:#222;transform:scaleX(0.9737);transform-origin:0 0;">Origin</div>
<div class="a t" style="left:116px;top:271.51px;font-size:10.97px;color:#222;transform:scaleX(0.9835);transform-origin:0 0;">Bodies</div>
<div class="a t" style="left:134.5px;top:295.51px;font-size:10.97px;color:#fff;font-weight:bold;transform:scaleX(0.9542);transform-origin:0 0;">Body1</div>
<div class="a t" style="left:134.5px;top:319.51px;font-size:10.97px;color:#fff;font-weight:bold;transform:scaleX(0.9840);transform-origin:0 0;">Body2</div>
<div class="a t" style="left:116px;top:343.51px;font-size:10.97px;color:#222;transform:scaleX(0.9970);transform-origin:0 0;">Sketches</div>
<div class="a" style="left:1666px;top:261px;width:250px;height:232px;background:#f1f1f1;border:1px solid #c3c3c3"></div>
<div class="a" style="left:1667px;top:285px;width:248px;height:1px;background:#cfcfcf;"></div>
<div class="a" style="left:1667px;top:456px;width:248px;height:1px;background:#cfcfcf;"></div>
<div class="a" style="left:1772.5px;top:288px;width:78px;height:26px;background:#fff;border:1px solid #dadada;border-radius:2px"></div>
<div class="a" style="left:1772.5px;top:317.5px;width:78px;height:27px;background:#0696d7;border-radius:2px;"></div>
<div class="a" style="left:1772.5px;top:347.5px;width:129px;height:27px;background:#fff;border:1px solid #dadada;border-radius:2px"></div>
<div class="a" style="left:1777px;top:384px;width:14px;height:14px;background:linear-gradient(#f4f4f4,#d8d8d8);border:1px solid #555;border-radius:3px"></div>
<div class="a" style="left:1777px;top:414px;width:14px;height:14px;background:linear-gradient(#f4f4f4,#d8d8d8);border:1px solid #555;border-radius:3px"></div>
<div class="a" style="left:1774px;top:465.5px;width:60px;height:18px;background:#e6e6e6;border:1px solid #c6c6c6"></div>
<div class="a" style="left:1844px;top:465.5px;width:60px;height:18px;background:#e6e6e6;border:1px solid #c6c6c6"></div>
<svg class="a" style="left:1660px;top:255px" width="260" height="245" viewBox="1660 255 260 245"><path d="M1668.5 269v9M1670.5 270v7" stroke="#9a9a9a" stroke-width="0.7"/><circle cx="1682.5" cy="273.5" r="4.8" fill="#222"/><path d="M1680 273.5h5" stroke="#f1f1f1" stroke-width="1.4"/><path d="M1900 270.5l5 3-5 3z M1905 270.5l5 3-5 3z" fill="#222"/><path d="M1780.5 294.5v13l3-2.8 2.4 4.6 1.6-0.8-2.3-4.5h4.2z" fill="#fff" stroke="#444" stroke-width="0.9"/><path d="M1780.5 324.5v13l3-2.8 2.4 4.6 1.6-0.8-2.3-4.5h4.2z" fill="#fff" stroke="#333" stroke-width="0.9"/><path d="M1862 297.5l7 7M1869 297.5l-7 7 M1862 327.5l7 7M1869 327.5l-7 7" stroke="#333" stroke-width="1.8"/><path d="M1779.5 353.5h7.5v7h-7.5z" fill="#fff" stroke="#333" stroke-width="0.9"/><path d="M1776.5 360.5h14v8h-14z" fill="#5aa1e6" stroke="#333" stroke-width="0.9"/><path d="M1779 360.5h9.5v3h-9.5z" fill="#fff"/><path d="M1889 359.5h6l-3 3.5z" fill="#333"/><path d="M1780 420.5l2.5 3 5-6.5" fill="none" stroke="#222" stroke-width="1.3"/><circle cx="1681" cy="475" r="6" fill="#111"/><path d="M1681 473.5v4.5" stroke="#fff" stroke-width="1.8"/><circle cx="1681" cy="471.2" r="1.1" fill="#fff"/></svg>
<div class="a t" style="left:1691px;top:268.79px;font-size:10.29px;color:#555;transform:scaleX(0.9372);transform-origin:0 0;">COMBINE</div>
<div class="a t" style="left:1679px;top:295.86px;font-size:11.39px;color:#222;transform:scaleX(0.9547);transform-origin:0 0;">Target Body</div>
<div class="a t" style="left:1679px;top:325.86px;font-size:11.39px;color:#222;transform:scaleX(0.9276);transform-origin:0 0;">Tool Bodies</div>
<div class="a t" style="left:1679px;top:355.86px;font-size:11.39px;color:#222;transform:scaleX(0.9401);transform-origin:0 0;">Operation</div>
<div class="a t" style="left:1679px;top:385.86px;font-size:11.39px;color:#222;transform:scaleX(0.9434);transform-origin:0 0;">New Component</div>
<div class="a t" style="left:1679px;top:415.86px;font-size:11.39px;color:#222;transform:scaleX(0.9372);transform-origin:0 0;">Keep Tools</div>
<div class="a t" style="left:1794px;top:295.86px;font-size:11.39px;color:#222;transform:scaleX(0.9634);transform-origin:0 0;">1 selected</div>
<div class="a t" style="left:1794px;top:325.86px;font-size:11.39px;color:#fff;transform:scaleX(0.9634);transform-origin:0 0;">1 selected</div>
<div class="a t" style="left:1796px;top:355.86px;font-size:11.39px;color:#222;transform:scaleX(0.9313);transform-origin:0 0;">Cut</div>
<div class="a t" style="left:1795.4px;top:468.75px;font-size:12.35px;color:#555;transform:scaleX(0.9082);transform-origin:0 0;">OK</div>
<div class="a t" style="left:1854.4px;top:468.75px;font-size:12.35px;color:#555;transform:scaleX(0.9785);transform-origin:0 0;">Cancel</div>
<svg class="a" style="left:1790px;top:150px" width="125" height="95" viewBox="1790 150 125 95">
<defs><radialGradient id="sh" cx="0.5" cy="0.5" r="0.5"><stop offset="0" stop-color="#000" stop-opacity="0.22"/><stop offset="1" stop-color="#000" stop-opacity="0"/></radialGradient>
<linearGradient id="cf" x1="0" y1="0" x2="0" y2="1"><stop offset="0" stop-color="#eeeeee"/><stop offset="1" stop-color="#dcdcdc"/></linearGradient></defs>
<ellipse cx="1856" cy="231" rx="36" ry="8" fill="url(#sh)"/>
<path d="M1823.3 177.2L1870.1 178.2L1869.6 231.1L1824.3 226Z" fill="url(#cf)" stroke="#888" stroke-width="0.8"/>
<path d="M1870.1 178.2L1886.4 176.2L1885.4 220.4L1869.6 231.1Z" fill="#e2e2e2" stroke="#888" stroke-width="0.8"/>
<path d="M1823.3 177.2L1835 175.5L1886.4 176.2" fill="none" stroke="#999" stroke-width="0.8"/>
<rect x="1861" y="188" width="12" height="33" fill="#d6d9de" opacity="0.7"/>
<text x="1831" y="209.5" font-family="Liberation Sans" font-size="14.5" font-weight="bold" fill="#8d9095" transform="translate(1831 0) scale(0.68 1) translate(-1831 0)">FRONT</text>
<path d="M1874.5 198v9M1875 203l4-5M1876.5 202l3 5M1881 198v8" stroke="#8d9095" stroke-width="1.3"/>
<path d="M1846 167.5v8" stroke="#66dd66" stroke-width="1.6"/>
<text x="1841.5" y="167.5" font-family="Liberation Sans" font-size="14.5" fill="#6ee06e" transform="translate(1841.5 0) scale(0.8 1) translate(-1841.5 0)">Y</text>
<path d="M1884 221.5h9" stroke="#ff9a9a" stroke-width="1.4"/>
<text x="1895.3" y="227.6" font-family="Liberation Sans" font-size="14.5" fill="#ff8585" transform="translate(1895.3 0) scale(0.78 1) translate(-1895.3 0)">X</text>
<path d="M1820 230l5-2" stroke="#7070ff" stroke-width="1.4"/>
<text x="1810.8" y="235.7" font-family="Liberation Sans" font-size="14.5" fill="#7777ff" transform="translate(1810.8 0) scale(0.85 1) translate(-1810.8 0)">Z</text>
</svg>
<div class="a" style="left:4px;top:961px;width:300px;height:25px;background:#f1f1f1;border:1px solid #c9c9c9"></div>
<div class="a t" style="left:29px;top:968.06px;font-size:10.56px;color:#555;transform:scaleX(0.9252);transform-origin:0 0;">COMMENTS</div>
<div class="a" style="left:833px;top:962px;width:253px;height:24px;background:rgba(240,240,240,0.95);"></div>
<div class="a t" style="left:1839px;top:968.66px;font-size:11.39px;color:#333;font-weight:bold;transform:scaleX(0.9821);transform-origin:0 0;">2 Bodies</div>
<div class="a" style="left:1520.5px;top:755.5px;width:208px;height:14.5px;background:#fbfbfb;border:1px solid #555"></div>
<div class="a t" style="left:1523.5px;top:757.36px;font-size:11.39px;color:#000;transform:scaleX(0.9490);transform-origin:0 0;">Select bodies to combine with target body</div>
<div class="a" style="left:0px;top:990px;width:1920px;height:2px;background:#c8c8c8;"></div>
<div class="a" style="left:0px;top:992px;width:1920px;height:48px;background:#f1f1f1;"></div>
<div class="a" style="left:0px;top:1039px;width:1920px;height:1px;background:#dcdcdc;"></div>
<svg class="a" style="left:0;top:955px" width="1920" height="85" viewBox="0 955 1920 85"><circle cx="287.3" cy="973.3" r="5" fill="#222"/><path d="M284.3 973.3h6M287.3 970.3v6" stroke="#f1f1f1" stroke-width="1.4"/><path d="M299.5 968v10M301.5 969v8" stroke="#9a9a9a" stroke-width="0.7"/><g fill="#333" stroke="#333">
<path d="M843.3 981.3v-11h-2.3l3.3-4 3.3 4h-2.3v11z" fill="#f4f4f4" stroke-width="0.9"/>
<path d="M841 972.8c-3 0.6-5 1.4-5 2.4 0 1.5 3.5 2.6 8 2.6s8-1.1 8-2.6c0-1-2-1.8-5-2.4" fill="none" stroke-width="1.1"/>
<path d="M838 977.8l3.3-2.2v4.2z" stroke="none"/>
<path d="M857.5 972.5h6l-3 3.5z" stroke="none"/>
<path d="M869.8 971.8h14.4v9.5h-14.4z" fill="#f4f4f4" stroke-width="1.1"/><path d="M872.5 974h9v4.2h-9z" fill="#b8bcc8" stroke-width="1"/><path d="M870.8 971.5l4-4.2v3 l3-1.6v1.5l3-1.2v2.5" fill="none" stroke-width="0.9"/>
<path d="M898 977.5c-1.5-1.5-2.5-3-1.3-3.8 1-0.6 2.2 0.6 3 1.5v-7.5c0-1.2 2-1.2 2 0v5.5-6.5c0-1.2 2-1.2 2 0v6.5-5.5c0-1.2 2-1.2 2 0v5.5-3.5c0-1.2 2-1.2 2 0v5.5c0 3.5-2 6-5.5 6h-1c-2.2 0-3.2-1.5-4.2-3.2z" fill="#f6f6f6" stroke-width="0.95"/>
<circle cx="925.7" cy="972.7" r="4.6" fill="#dfeaf0" stroke-width="1.2"/><path d="M929 976l3.8 3.8" stroke-width="2.3"/><path d="M932.7 970.5h4.2M934.8 967.5v4M932.7 972.5h4.2" stroke-width="0.9"/>
<circle cx="953.3" cy="972.3" r="5.6" fill="#e4eef2" stroke-width="1.3"/><rect x="950.3" y="969.3" width="6" height="6" fill="#f4f4f4" stroke-width="1"/><path d="M957.5 976.5l4 4" stroke-width="2.3"/>
<path d="M968.5 973h6l-3 3.5z" stroke="none"/>
<rect x="988.5" y="966.3" width="15.3" height="12.4" rx="1.2" fill="#efefef" stroke="#333" stroke-width="1"/><rect x="990.6" y="968.4" width="11" height="8" rx="0.8" fill="#9dbde5" stroke="#2c4a80" stroke-width="0.9"/><path d="M993 979v2h6v-2" fill="#fff" stroke="#333" stroke-width="0.9"/>
<path d="M1006.5 973h6l-3 3.5z" stroke="none"/>
<rect x="1019.4" y="966.3" width="15.3" height="15.3" rx="1.5" fill="#555" stroke="#444" stroke-width="0.8"/><rect x="1020.60" y="967.50" width="2.4" height="2.4" fill="#fff" stroke="none"/><rect x="1020.60" y="970.55" width="2.4" height="2.4" fill="#f4f4f4" stroke="none"/><rect x="1020.60" y="973.60" width="2.4" height="2.4" fill="#e6e6e6" stroke="none"/><rect x="1020.60" y="976.65" width="2.4" height="2.4" fill="#d4d6da" stroke="none"/><rect x="1020.60" y="979.70" width="2.4" height="2.4" fill="#c4c8ce" stroke="none"/><rect x="1023.65" y="967.50" width="2.4" height="2.4" fill="#fff" stroke="none"/><rect x="1023.65" y="970.55" width="2.4" height="2.4" fill="#f4f4f4" stroke="none"/><rect x="1023.65" y="973.60" width="2.4" height="2.4" fill="#e6e6e6" stroke="none"/><rect x="1023.65" y="976.65" width="2.4" height="2.4" fill="#d4d6da" stroke="none"/><rect x="1023.65" y="979.70" width="2.4" height="2.4" fill="#c4c8ce" stroke="none"/><rect x="1026.70" y="967.50" width="2.4" height="2.4" fill="#fff" stroke="none"/><rect x="1026.70" y="970.55" width="2.4" height="2.4" fill="#f4f4f4" stroke="none"/><rect x="1026.70" y="973.60" width="2.4" height="2.4" fill="#e6e6e6" stroke="none"/><rect x="1026.70" y="976.65" width="2.4" height="2.4" fill="#d4d6da" stroke="none"/><rect x="1026.70" y="979.70" width="2.4" height="2.4" fill="#c4c8ce" stroke="none"/><rect x="1029.75" y="967.50" width="2.4" height="2.4" fill="#fff" stroke="none"/><rect x="1029.75" y="970.55" width="2.4" height="2.4" fill="#f4f4f4" stroke="none"/><rect x="1029.75" y="973.60" width="2.4" height="2.4" fill="#e6e6e6" stroke="none"/><rect x="1029.75" y="976.65" width="2.4" height="2.4" fill="#d4d6da" stroke="none"/><rect x="1029.75" y="979.70" width="2.4" height="2.4" fill="#c4c8ce" stroke="none"/><rect x="1032.80" y="967.50" width="2.4" height="2.4" fill="#fff" stroke="none"/><rect x="1032.80" y="970.55" width="2.4" height="2.4" fill="#f4f4f4" stroke="none"/><rect x="1032.80" y="973.60" width="2.4" height="2.4" fill="#e6e6e6" stroke="none"/><rect x="1032.80" y="976.65" width="2.4" height="2.4" fill="#d4d6da" stroke="none"/><rect x="1032.80" y="979.70" width="2.4" height="2.4" fill="#c4c8ce" stroke="none"/>
<path d="M1037.5 973h6l-3 3.5z" stroke="none"/>
<g fill="#a9c4ea" stroke="#2c4a80" stroke-width="1"><rect x="1050.3" y="967.3" width="7.2" height="6.2" rx="1"/><rect x="1057.5" y="967.3" width="7.2" height="6.2" rx="1"/><rect x="1050.3" y="973.5" width="7.2" height="6.2" rx="1"/><rect x="1057.5" y="973.5" width="7.2" height="6.2" rx="1"/></g>
<g fill="#c9daf2" stroke="none"><rect x="1052.3" y="969.6" width="3" height="1.6"/><rect x="1059.5" y="969.6" width="3" height="1.6"/><rect x="1052.3" y="975.8" width="3" height="1.6"/><rect x="1059.5" y="975.8" width="3" height="1.6"/></g>
<path d="M1068.5 973h6l-3 3.5z" stroke="none"/>
</g><g fill="#444">
<rect x="11" y="1008.8" width="1.8" height="14.2"/><path d="M23 1009v13l-8.5-6.5z"/>
<path d="M45 1009v13l-9.5-6.5z"/><rect x="46" y="1013.5" width="1.8" height="5"/>
<path d="M61 1008.5v15.5l12-7.7z"/>
<rect x="85" y="1013.5" width="1.8" height="5"/><path d="M88 1009v13l9.5-6.5z"/>
<path d="M111 1009v13l9.5-6.5z"/><rect x="122.5" y="1008.8" width="1.8" height="14.2"/>
</g>
<g>
<path d="M147.5 1008.5h12v12h-12z" fill="none" stroke="#333" stroke-width="0.8" stroke-dasharray="4 1"/>
<rect x="146" y="1007" width="2" height="2" fill="#1e88e5"/><rect x="159" y="1007" width="2" height="2" fill="#1e88e5"/><rect x="146" y="1020" width="2" height="2" fill="#1e88e5"/>
<path d="M155 1022l5-5.5 2 1.5-5 5.5z" fill="#f5b940"/><circle cx="161" cy="1016.5" r="1.3" fill="#e53935"/>
<path d="M170 1010.5l3-2.5h8l-2 2.5z" fill="#8fcdf7"/><path d="M170 1010.5h9v11h-9z" fill="#5fa8e4"/><path d="M179 1010.5l2-2.5v11l-2 2.5z" fill="#3f86c8"/><path d="M170 1021.5h9l2-2.5v2l-2 2.5h-9z" fill="#c4c4c4"/>
<path d="M184 1020v-10" stroke="#222" stroke-width="1.1"/><path d="M182.5 1011.5l1.5-3 1.5 3z" fill="#222"/>
<path d="M170.5 1003.8l3-3.6 M175.3 1003.8l3-3.6 M180.1 1003.8l3-3.6" stroke="#3a3a3a" stroke-width="2" stroke-linecap="round"/>
<path d="M195.5 1008.5h12v12h-12z" fill="none" stroke="#333" stroke-width="0.8" stroke-dasharray="4 1"/>
<rect x="194" y="1007" width="2" height="2" fill="#1e88e5"/><rect x="207" y="1007" width="2" height="2" fill="#1e88e5"/><rect x="194" y="1020" width="2" height="2" fill="#1e88e5"/>
<path d="M203 1022l5-5.5 2 1.5-5 5.5z" fill="#f5b940"/><circle cx="209" cy="1016.5" r="1.3" fill="#e53935"/>
<path d="M218 1010.5l3-2.5h8l-2 2.5z" fill="#8fcdf7"/><path d="M218 1010.5h9v11h-9z" fill="#5fa8e4"/><path d="M227 1010.5l2-2.5v11l-2 2.5z" fill="#3f86c8"/><path d="M218 1021.5h9l2-2.5v2l-2 2.5h-9z" fill="#c4c4c4"/>
<path d="M232 1020v-10" stroke="#222" stroke-width="1.1"/><path d="M230.5 1011.5l1.5-3 1.5 3z" fill="#222"/>
<path d="M218.5 1003.8l3-3.6 M223.3 1003.8l3-3.6 M228.1 1003.8l3-3.6" stroke="#3a3a3a" stroke-width="2" stroke-linecap="round"/>
<path d="M154.5 1026v5.5h72v-5.5M178.5 1026v5.5M202.5 1026v5.5" fill="none" stroke="#c6c6c6" stroke-width="1.5"/>
<path d="M232 1001h12v3l-4.5 4v-0z" fill="#666"/><path d="M232 1001h12v3l-5 4h-2l-5-4z" fill="#666"/><rect x="237.5" y="1006" width="1.8" height="27" fill="#555"/>
</g>
<g transform="translate(1898 1016)" fill="#8a8a8a"><circle r="5.5"/><path d="M-1.6-8h3.2v16h-3.2z"/><path d="M-1.6-8h3.2v16h-3.2z" transform="rotate(45)"/><path d="M-1.6-8h3.2v16h-3.2z" transform="rotate(90)"/><path d="M-1.6-8h3.2v16h-3.2z" transform="rotate(135)"/><circle r="2.3" fill="#f1f1f1"/></g></svg>
<div class="a" style="left:0px;top:1040px;width:1920px;height:40px;background:linear-gradient(90deg,#e6d6d1 0%,#e2d6d4 18%,#d9d9df 35%,#d3dbe4 50%,#d4dbe4 62%,#dcd9e0 72%,#e6d9dd 82%,#e9dbdf 100%);"></div>
<div class="a" style="left:48.5px;top:1040px;width:342.5px;height:40px;background:#fff;border:1px solid #d0d0d0;border-bottom:none;"></div>
<div class="a" style="left:1471px;top:1040px;width:48px;height:40px;background:rgba(255,255,255,0.35);"></div>
<div class="a" style="left:642px;top:1077px;width:40px;height:3px;background:#d7642a;"></div>
<div class="a" style="left:691px;top:1077px;width:40px;height:3px;background:#d7642a;"></div>
<div class="a" style="left:1471px;top:1077px;width:48px;height:3px;background:#d7642a;"></div>
<svg class="a" style="left:0;top:1040px" width="1920" height="40" viewBox="0 1040 1920 40"><path d="M17 1053.5l6.8-1v6.8H17z M24.8 1052.4l8.2-1.2v8.1h-8.2z M17 1060.3h6.8v6.8l-6.8-1z M24.8 1060.3H33v8.1l-8.2-1.2z" fill="#111"/><circle cx="68.5" cy="1057.5" r="6" fill="none" stroke="#222" stroke-width="1.3"/><path d="M64.5 1061.8l-5.5 5.5" stroke="#222" stroke-width="1.6"/><circle cx="416" cy="1060" r="8.3" fill="none" stroke="#111" stroke-width="2"/><path d="M455.5 1052.5h15M455.5 1067.5h15M458 1055.5h10v9h-10z" fill="none" stroke="#222" stroke-width="1.5"/><path d="M471.5 1055v3M471.5 1061v3" stroke="#222" stroke-width="1.5"/><ellipse cx="514" cy="1055.5" rx="10" ry="6" fill="none" stroke="#e04848" stroke-width="1.6"/><path d="M511 1056l6 10M518 1056l-6 10" stroke="#555" stroke-width="1"/><circle cx="510.5" cy="1067" r="2.5" fill="none" stroke="#1e7fd8" stroke-width="1.5"/><circle cx="519" cy="1067" r="2.5" fill="none" stroke="#1e7fd8" stroke-width="1.5"/><path d="M552 1057h22v11h-22z" fill="#3c3f46"/><path d="M555 1051h16l3 6h-22z" fill="#6d7380"/><path d="M557 1060h12v6h-12z" fill="#fff"/><path d="M559 1062h4v3h-4z" fill="#7bb55a"/><path d="M564 1062h4v3h-4z" fill="#4c8fe0"/><path d="M558 1052l5 3 5-3" stroke="#fff" stroke-width="1" fill="none"/><rect x="600" y="1048" width="24" height="24" fill="#fff"/><circle cx="612" cy="1060" r="11" fill="#2f7fd0"/><path d="M601 1053h22M601 1056h22M601 1064h22M601 1067h22" stroke="#fff" stroke-width="1.5"/><text x="601" y="1064.5" font-family="Liberation Sans" font-weight="bold" font-size="10.5" fill="#fff" stroke="#1c5fb0" stroke-width="0.4">FAX</text><path d="M648 1052h9l2 2h13v16h-24z" fill="#f2b51f"/><path d="M648 1057h24v13h-24z" fill="#fbd15c"/><path d="M656 1063h8v7h-2v-4h-4v4h-2z" fill="#1f78d1"/><circle cx="710" cy="1060" r="11" fill="#db4437"/><path d="M710 1060L700.5 1065.5A11 11 0 0 1 710.5 1049z" fill="#db4437"/><path d="M700.5 1065.5A11 11 0 0 0 719.5 1065.5L710 1060z" fill="#0f9d58"/><path d="M719.5 1065.5A11 11 0 0 0 710 1049L710 1060z" fill="#f4b400"/><circle cx="710" cy="1060" r="5" fill="#fff"/><circle cx="710" cy="1060" r="3.8" fill="#4285f4"/><path d="M750 1056.5h17M767 1063.5h-17" stroke="#111" stroke-width="1.8"/><path d="M753 1053l-4 3.5 4 3.5z M764 1060l4 3.5-4 3.5z" fill="#111"/><rect x="799" y="1048" width="18" height="23" rx="1.5" fill="#3a3a3a"/><rect x="801.5" y="1050.5" width="13" height="5" fill="#d8d8d8"/><g fill="#ddd"><rect x="801.5" y="1058" width="3" height="2.5"/><rect x="806.5" y="1058" width="3" height="2.5"/><rect x="811.5" y="1058" width="3" height="2.5"/><rect x="801.5" y="1062.5" width="3" height="2.5"/><rect x="806.5" y="1062.5" width="3" height="2.5"/><rect x="811.5" y="1062.5" width="3" height="2.5"/><rect x="801.5" y="1067" width="3" height="2.5"/><rect x="806.5" y="1067" width="3" height="2.5"/><rect x="811.5" y="1067" width="3" height="2.5"/></g><path d="M847 1050h15l5 4v17h-20z" fill="#e9f0e3" stroke="#777" stroke-width="0.8"/><path d="M848.5 1058h17v12h-17z" fill="#55b848"/><path d="M852 1060v8M855 1063v5h6" stroke="#222" stroke-width="1"/><path d="M860 1062l7-11 2 1-7 11z" fill="#e39a2b"/><rect x="894" y="1048" width="24" height="24" rx="2" fill="#141a2e"/><path d="M898.5 1065a7.5 7.5 0 1 1 15 0" fill="none" stroke="#fff" stroke-width="1.8"/><path d="M906 1065l4-5" stroke="#fff" stroke-width="1.8"/><path d="M946 1049h20v16l-6 6h-14z" fill="#f7b500"/><path d="M960 1071v-6h6z" fill="#fde08a"/><circle cx="956" cy="1058" r="4.5" fill="none" stroke="#fff" stroke-width="1.6"/><path d="M954 1063h4v3h-4z" fill="#fff"/><path d="M1003.2 1049.5c0.8-1 1.8-1 2.6 0l6.5 17.5h-15.6z" fill="#f28a12"/><path d="M1001.2 1054.8h7.6l1.3 3h-10.2z M999.3 1060.5h11.4l1.3 3.5h-14z" fill="#e8e8e8"/><path d="M995.2 1067h19.6l0.6 3.8h-20.8z" fill="#f39c1a"/><circle cx="1054.2" cy="1059.5" r="10.8" fill="#eef2f6"/><path d="M1043.4 1059.5a10.8 10.8 0 0 1 11-10.8c-4 2-5 6-2 9l10 5c-2 5-6 7.5-8 7.8a10.8 10.8 0 0 1-11-11z" fill="#3d8fd8"/><path d="M1044 1054.5l19 8.5-1.5 3.5-18.5-8z" fill="#1d2733"/><path d="M1046.5 1057l2.5 1M1051 1059l2.5 1M1055.5 1061l2.5 1" stroke="#6aa7e8" stroke-width="1.4"/><circle cx="1102.5" cy="1059.5" r="10.2" fill="#2a2a2a" stroke="#e0e0e0" stroke-width="0.6"/><path d="M1102 1050.5c-3 1-4.5 4-3.5 7M1094.5 1063c1.5 2.5 4.5 3.5 7 2.5M1110.5 1061c0.5-3-1.5-5.5-4.5-6.5" fill="none" stroke="#d8d8d8" stroke-width="1.3"/><rect x="1140" y="1047.8" width="24" height="24" rx="6.5" fill="#7b5cf2"/><circle cx="1151.9" cy="1059.7" r="7" fill="none" stroke="#fff" stroke-width="2.2"/><circle cx="1148.8" cy="1056.5" r="1.1" fill="#fff"/><defs><linearGradient id="rb" x1="0" y1="0" x2="1" y2="1"><stop offset="0" stop-color="#ff1a1a"/><stop offset="0.3" stop-color="#ffe000"/><stop offset="0.55" stop-color="#30d040"/><stop offset="1" stop-color="#1040ff"/></linearGradient></defs><rect x="1189.7" y="1047.7" width="22.2" height="23.9" fill="#111"/><rect x="1191.2" y="1050.8" width="19.2" height="17.8" fill="url(#rb)"/><rect x="1191.5" y="1048.6" width="1.4" height="1.2" fill="#fff"/><rect x="1191.5" y="1069.6" width="1.4" height="1.2" fill="#fff"/><rect x="1194.1" y="1048.6" width="1.4" height="1.2" fill="#fff"/><rect x="1194.1" y="1069.6" width="1.4" height="1.2" fill="#fff"/><rect x="1196.7" y="1048.6" width="1.4" height="1.2" fill="#fff"/><rect x="1196.7" y="1069.6" width="1.4" height="1.2" fill="#fff"/><rect x="1199.3" y="1048.6" width="1.4" height="1.2" fill="#fff"/><rect x="1199.3" y="1069.6" width="1.4" height="1.2" fill="#fff"/><rect x="1201.9" y="1048.6" width="1.4" height="1.2" fill="#fff"/><rect x="1201.9" y="1069.6" width="1.4" height="1.2" fill="#fff"/><rect x="1204.5" y="1048.6" width="1.4" height="1.2" fill="#fff"/><rect x="1204.5" y="1069.6" width="1.4" height="1.2" fill="#fff"/><rect x="1207.1" y="1048.6" width="1.4" height="1.2" fill="#fff"/><rect x="1207.1" y="1069.6" width="1.4" height="1.2" fill="#fff"/><rect x="1209.7" y="1048.6" width="1.4" height="1.2" fill="#fff"/><rect x="1209.7" y="1069.6" width="1.4" height="1.2" fill="#fff"/><defs><linearGradient id="kr" x1="0" y1="0" x2="1" y2="1"><stop offset="0" stop-color="#f7a0f0"/><stop offset="0.5" stop-color="#b8f0ff"/><stop offset="1" stop-color="#ffd080"/></linearGradient></defs><circle cx="1250" cy="1060" r="10" fill="url(#kr)"/><circle cx="1251" cy="1061" r="5.5" fill="#f4f4ff"/><path d="M1239.3 1051.2l14 11.5" stroke="#3a3a3a" stroke-width="2.2" stroke-linecap="round"/><path d="M1252 1061.5l3.5 3" stroke="#555" stroke-width="3"/><circle cx="1302.2" cy="1061" r="7.8" fill="#f0820f"/><path d="M1288 1064.5l9-7M1293 1052.5l7 4.5M1289.5 1057.5h8" stroke="#f0820f" stroke-width="2.8" stroke-linecap="round"/><circle cx="1302.2" cy="1061" r="4.6" fill="#fff"/><circle cx="1302.4" cy="1061.2" r="2.8" fill="#2a6eb4"/><path d="M1336 1049h12.4v4.5h-7.4v3.8h6v4h-6v7.6h-5z" fill="#f04a1a" stroke="#9a2a0a" stroke-width="0.6"/><g transform="translate(1350 1063)"><circle r="6" fill="#2160c4"/><path d="M-1.8-9h3.6v18h-3.6z" fill="#2160c4"/><path d="M-1.8-9h3.6v18h-3.6z" fill="#2160c4" transform="rotate(45)"/><path d="M-1.8-9h3.6v18h-3.6z" fill="#2160c4" transform="rotate(90)"/><path d="M-1.8-9h3.6v18h-3.6z" fill="#2160c4" transform="rotate(135)"/><circle r="2.5" fill="#e2ddd6"/></g><circle cx="1396.9" cy="1060" r="10.8" fill="#666"/><circle cx="1399.3" cy="1062.4" r="8.6" fill="#d9dde3"/><circle cx="1399.6" cy="1062.7" r="7.6" fill="#3c3c3c"/><rect x="1434.1" y="1047.7" width="23.9" height="23.9" fill="#f2f2f2"/><path d="M1446 1054l6 3.5v7l-6 3.5-6-3.5v-7z" fill="none" stroke="#111" stroke-width="1.6"/><path d="M1446 1061l6-3.5M1446 1061l-6-3.5M1446 1061v7" stroke="#111" stroke-width="1.4"/><defs><linearGradient id="fu" x1="0" y1="0" x2="1" y2="1"><stop offset="0" stop-color="#f7a94a"/><stop offset="1" stop-color="#d4702a"/></linearGradient></defs><rect x="1483.7" y="1048.5" width="23" height="23.1" fill="#f8e0c8"/><path d="M1488 1052h12l-1.5 4h-6.5v3.5h5.5l-1.5 3.5h-4v6.5l-4-1.5z" fill="url(#fu)"/><path d="M1492 1063h6v6h-6z" fill="#f3c79a" opacity="0.8"/><text x="1499" y="1070" font-family="Liberation Sans" font-size="4.2" fill="#c86a2a">360</text><path d="M1675 1063l5.5-5.5 5.5 5.5" fill="none" stroke="#222" stroke-width="1.3"/><defs><linearGradient id="cl" x1="0" y1="0" x2="0" y2="1"><stop offset="0" stop-color="#9a9a9a"/><stop offset="1" stop-color="#5a5a5a"/></linearGradient></defs><path d="M1699.5 1065h11.5a3.5 3.5 0 0 0 0.5-7 5.2 5.2 0 0 0-9.8-1.8 4.2 4.2 0 0 0-2.2 8.8z" fill="url(#cl)" stroke="#444" stroke-width="0.9"/><path d="M1721.5 1054.5h15v8h-15z" fill="none" stroke="#333" stroke-width="1.1"/><path d="M1729 1062.5v3.5M1724.5 1066.5h9M1723.5 1062.5v4" stroke="#333" stroke-width="1.1"/><path d="M1721.6 1054.6h4.7v3.7h-4.7z" fill="#e6d8dc" stroke="#333" stroke-width="0.9"/><path d="M1745 1057h3l4-3.5v13l-4-3.5h-3z" fill="none" stroke="#333" stroke-width="1.1"/><path d="M1754.5 1057a4 4 0 0 1 0 6M1757 1055a7 7 0 0 1 0 10" fill="none" stroke="#555" stroke-width="1"/><path d="M1778 1067l2-5 7-9 2 1.5-7 9-4 3.5z M1785 1056.5l2 1.5M1777.5 1063c-3 0.5-4 3-2 4.5M1787 1059c2 0 2 2 0.5 3" fill="none" stroke="#222" stroke-width="1.1"/><path d="M1879.5 1052.5h15.5v12.5h-5l-2.7 2.7-2.7-2.7h-5.1z" fill="none" stroke="#222" stroke-width="1.2"/><path d="M1915.5 1040v40" stroke="#b9b0b3" stroke-width="1"/></svg>
<div class="a t" style="left:88px;top:1053.23px;font-size:15.09px;color:#333;transform:scaleX(0.9767);transform-origin:0 0;">Taper ici pour rechercher</div>
<div class="a t" style="left:1817.7px;top:1044.55px;font-size:12.35px;color:#222;transform:scaleX(0.8837);transform-origin:0 0;">07:56</div>
<div class="a t" style="left:1802.7px;top:1062.25px;font-size:12.35px;color:#222;transform:scaleX(0.9436);transform-origin:0 0;">08/02/2020</div>
</body></html>
